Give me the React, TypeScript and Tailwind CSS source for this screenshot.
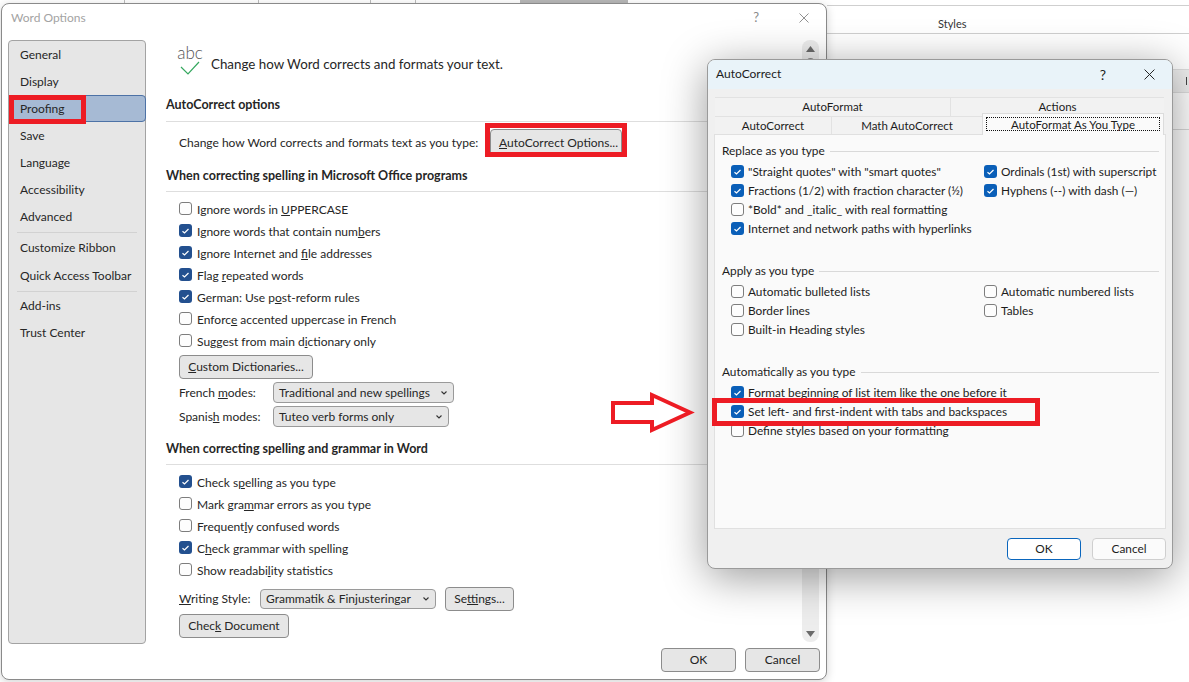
import type { ReactNode } from 'react';

type Tone = 'word' | 'dialog';

function Checkbox({ checked, tone, className }: { checked: boolean; tone: Tone; className?: string }) {
    if (!checked) {
        return <span className={`w-[13px] h-[13px] shrink-0 rounded-[3px] border border-[#7d7d7d] bg-[#fdfdfd] ${className ?? ''}`} />;
    }
    return (
        <span className={`w-[13px] h-[13px] shrink-0 rounded-[3px] flex items-center justify-center ${tone === 'word' ? 'bg-[#23508f]' : 'bg-[#0a5fb8]'} ${className ?? ''}`}>
            <svg width="9" height="8" viewBox="0 0 9 8" fill="none">
                <path d="M1.5 4.2 L3.5 6 L7.5 2" stroke="white" strokeWidth="1.2" />
            </svg>
        </span>
    );
}

function CheckRow({ checked, children }: { checked?: boolean; children: ReactNode }) {
    return (
        <div className="flex items-center h-[22px] gap-[5px] whitespace-nowrap">
            <Checkbox checked={!!checked} tone="word" className="-mt-[3px]" />
            <span>{children}</span>
        </div>
    );
}

function DialogCheck({ checked, children }: { checked?: boolean; children: ReactNode }) {
    return (
        <div className="flex items-center h-[19px] gap-[4px] whitespace-nowrap">
            <Checkbox checked={!!checked} tone="dialog" />
            <span>{children}</span>
        </div>
    );
}

function NavItem({ label, active, h = 'h-[27px]' }: { label: string; active?: boolean; h?: string }) {
    return (
        <div className={`${h} flex items-center ${active ? 'bg-[#a6bad4] border border-[#4d72a6] rounded-r-[4px] pl-[10px] -mr-px' : 'pl-[11px]'}`}>
            {label}
        </div>
    );
}

function SectionHead({ children, className }: { children: ReactNode; className: string }) {
    return (
        <div className={`${className} h-[20px] leading-[20px] text-[12.5px] font-bold text-[#262626]`}>
            {children}
        </div>
    );
}

function Btn({ className, children }: { className: string; children: ReactNode }) {
    return (
        <div className={`${className} flex items-center justify-center rounded-[4px] border border-[#8c8c8c] bg-[#e6e6e6] whitespace-nowrap`}>
            {children}
        </div>
    );
}

function Select({ className, children }: { className: string; children: ReactNode }) {
    return (
        <div className={`${className} flex items-center justify-between pl-[5px] pr-[5px] rounded-[4px] border border-[#9a9a9a] bg-[#e6e6e6] whitespace-nowrap`}>
            <span>{children}</span>
            <svg width="8" height="6" viewBox="0 0 8 6" fill="none">
                <path d="M1.5 1.5 L4 4 L6.5 1.5" stroke="#333" strokeWidth="1.1" />
            </svg>
        </div>
    );
}

function CloseIcon({ size, color }: { size: number; color: string }) {
    return (
        <svg width={size} height={size} viewBox="0 0 10 10" fill="none">
            <path d="M0.5 0.5 L9.5 9.5 M9.5 0.5 L0.5 9.5" stroke={color} strokeWidth="0.9" />
        </svg>
    );
}

function Group({ title, left, right, className }: { title: string; left: ReactNode; right?: ReactNode; className?: string }) {
    return (
        <div className={className}>
            <div className="flex items-center h-[20px] gap-[5px]">
                <span className="whitespace-nowrap">{title}</span>
                <div className="flex-1 h-px bg-[#d9d9d9]" />
            </div>
            <div className="flex pl-[9px] mt-[1px]">
                <div className="w-[253px]">{left}</div>
                <div>{right}</div>
            </div>
        </div>
    );
}

function WordOptions() {
    return (
        <div className="absolute left-[1px] top-[3px] w-[826px] h-[677px] flex flex-col rounded-[8px] border border-[#8a8a8a] bg-white shadow-[0_2px_10px_rgba(0,0,0,0.18)]">
            <div className="h-[36px] shrink-0 flex items-center pl-[9px] text-[#a3a3a3] pb-[8px]">
                <span className="flex-1">Word Options</span>
                <span className="text-[13px] text-[#8a8a8a] mr-[40px]">?</span>
                <span className="mr-[17px]"><CloseIcon size={10} color="#858585" /></span>
            </div>
            <div className="flex h-[604px] shrink-0 pl-[6px]">
                <div className="w-[138px] shrink-0 rounded-[4px] border border-[#a3a3a3] bg-[#e6e6e6] text-[#262626]">
                    <NavItem label="General" />
                    <NavItem label="Display" />
                    <NavItem label="Proofing" active />
                    <NavItem label="Save" />
                    <NavItem label="Language" />
                    <NavItem label="Accessibility" />
                    <NavItem label="Advanced" h="h-[28px]" />
                    <div className="h-[2px] mx-[8px] border-b border-[#d2d2d2]" />
                    <NavItem label="Customize Ribbon" h="h-[29px]" />
                    <NavItem label="Quick Access Toolbar" h="h-[28px]" />
                    <div className="h-[2px] mx-[8px] border-b border-[#d2d2d2]" />
                    <NavItem label="Add-ins" h="h-[27px]" />
                    <NavItem label="Trust Center" />
                </div>
                <div className="w-[636px] shrink-0 ml-[20px] text-[#262626]">
                    <div className="h-[42px] flex items-center pl-[12px] pt-[6px]">
                        <div className="w-[24px] flex flex-col items-center -mt-[9px]">
                            <span className="text-[17px] leading-[17px] font-light text-[#555]">abc</span>
                            <svg width="20" height="14" viewBox="0 0 20 14" fill="none">
                                <path d="M1 6 L8 13 L19 1" stroke="#35a85f" strokeWidth="1.2" />
                            </svg>
                        </div>
                        <span className="ml-[9px] text-[13.35px]">Change how Word corrects and formats your text.</span>
                    </div>
                    <SectionHead className="mt-[13px]">AutoCorrect options</SectionHead>
                    <div className="mt-[6px] h-px bg-[#dedede] mr-[5px]" />
                    <div className="mt-[7px] flex items-center pl-[13px] h-[27px]">
                        <span className="w-[311px] whitespace-nowrap">Change how Word corrects and formats text as you type:</span>
                        <Btn className="w-[132px] h-[27px] pl-[5px]"><span><u>A</u>utoCorrect Options...</span></Btn>
                    </div>
                    <SectionHead className="mt-[10px]">When correcting spelling in Microsoft Office programs</SectionHead>
                    <div className="mt-[5px] h-px bg-[#dedede] mr-[5px]" />
                    <div className="mt-[7px] pl-[13px]">
                        <CheckRow>Ignore words in <u>U</u>PPERCASE</CheckRow>
                        <CheckRow checked>Ignore words that contain num<u>b</u>ers</CheckRow>
                        <CheckRow checked>Ignore Internet and <u>f</u>ile addresses</CheckRow>
                        <CheckRow checked>Flag <u>r</u>epeated words</CheckRow>
                        <CheckRow checked>German: Use p<u>o</u>st-reform rules</CheckRow>
                        <CheckRow>Enforc<u>e</u> accented uppercase in French</CheckRow>
                        <CheckRow>Suggest from main d<u>i</u>ctionary only</CheckRow>
                        <Btn className="w-[134px] h-[24px] mt-[2px]"><span><u>C</u>ustom Dictionaries...</span></Btn>
                        <div className="flex items-center h-[21px] mt-[3px]">
                            <span className="w-[94px]">French <u>m</u>odes:</span>
                            <Select className="w-[181px] h-[21px]">Traditional and new spellings</Select>
                        </div>
                        <div className="flex items-center h-[21px] mt-[3px]">
                            <span className="w-[94px] whitespace-nowrap">Spanis<u>h</u> modes:</span>
                            <Select className="w-[176px] h-[21px]">Tuteo verb forms only</Select>
                        </div>
                    </div>
                    <SectionHead className="mt-[12px]">When correcting spelling and grammar in Word</SectionHead>
                    <div className="mt-[5px] h-px bg-[#dedede] mr-[5px]" />
                    <div className="mt-[7px] pl-[13px]">
                        <CheckRow checked>Check s<u>p</u>elling as you type</CheckRow>
                        <CheckRow>Mark gra<u>m</u>mar errors as you type</CheckRow>
                        <CheckRow>Frequent<u>l</u>y confused words</CheckRow>
                        <CheckRow checked>C<u>h</u>eck grammar with spelling</CheckRow>
                        <CheckRow>Show readabi<u>l</u>ity statistics</CheckRow>
                        <div className="flex items-center mt-[5px] h-[24px]">
                            <span className="w-[81px]"><u>W</u>riting Style:</span>
                            <Select className="w-[176px] h-[20px]">Grammatik &amp; Finjusteringar</Select>
                            <Btn className="w-[69px] h-[24px] ml-[9px]"><span>Se<u>t</u>tings...</span></Btn>
                        </div>
                        <Btn className="w-[110px] h-[24px] mt-[3px]"><span>Chec<u>k</u> Document</span></Btn>
                    </div>
                </div>
                <div className="w-[17px] shrink-0 rounded-[8px] bg-[#ededed] flex flex-col items-center pt-[6px] pb-[5px] h-[602px]">
                    <svg width="9" height="6" viewBox="0 0 9 6"><path d="M4.5 0 L9 6 L0 6 Z" fill="#6b6b6b" /></svg>
                    <div className="w-[9px] h-[340px] mt-[6px] rounded-full bg-[#8a8a8a]" />
                    <div className="flex-1" />
                    <svg width="9" height="6" viewBox="0 0 9 6"><path d="M0 0 L9 0 L4.5 6 Z" fill="#6b6b6b" /></svg>
                </div>
            </div>
            <div className="flex justify-end gap-[9px] pt-[4px] pr-[6px]">
                <Btn className="w-[75px] h-[24px]">OK</Btn>
                <Btn className="w-[75px] h-[24px]">Cancel</Btn>
            </div>
        </div>
    );
}

function AutoCorrectDialog() {
    return (
        <div className="absolute left-[707px] top-[59px] w-[466px] h-[510px] flex flex-col rounded-[8px] border border-[#9a9a9a] bg-[#f0f0f0] overflow-hidden text-[11.85px] text-[#1c1c1c] shadow-[0_8px_44px_rgba(0,0,0,0.4)]">
            <div className="h-[29px] shrink-0 flex items-center bg-[#e9f3f9] pl-[8px] pb-[1px] text-[12px]">
                <span className="flex-1">AutoCorrect</span>
                <span className="text-[14px] mr-[38px]">?</span>
                <span className="mr-[17px]"><CloseIcon size={11} color="#222" /></span>
            </div>
            <div className="pl-[6px] pt-[8px]">
                <div className="ml-px flex w-[449px] h-[19px] text-center text-[11.5px]">
                    <div className="w-[236px] bg-[#f2f2f2] border-t border-r border-[#e2e2e2] leading-[18px]">AutoFormat</div>
                    <div className="w-[213px] bg-[#f2f2f2] border-t border-[#e2e2e2] leading-[18px]">Actions</div>
                </div>
                <div className="ml-px flex w-[450px] h-[18px] text-center text-[11.5px] items-end relative z-10">
                    <div className="w-[117px] h-[18px] bg-[#f2f2f2] border-t border-r border-[#e2e2e2] leading-[18px]">AutoCorrect</div>
                    <div className="w-[150px] h-[18px] bg-[#f2f2f2] border-t border-[#e2e2e2] leading-[18px]">Math AutoCorrect</div>
                    <div className="w-[182px] h-[22px] -mb-px bg-[#fafafa] border-t border-x border-[#dcdcdc] p-[3px]">
                        <div className="h-[14px] leading-[13px] border border-dotted border-[#111]">AutoFormat As You Type</div>
                    </div>
                </div>
                <div className="w-[452px] h-[395px] border border-[#e0e0e0] bg-[#fafafa] pt-[6px] pl-[7px] pr-[6px]">
                    <Group
                        title="Replace as you type"
                        left={<>
                            <DialogCheck checked>"Straight quotes" with "smart quotes"</DialogCheck>
                            <DialogCheck checked>Fractions (1/2) with fraction character (½)</DialogCheck>
                            <DialogCheck>*Bold* and _italic_ with real formatting</DialogCheck>
                            <DialogCheck checked>Internet and network paths with hyperlinks</DialogCheck>
                        </>}
                        right={<>
                            <DialogCheck checked>Ordinals (1st) with superscript</DialogCheck>
                            <DialogCheck checked>Hyphens (--) with dash (—)</DialogCheck>
                        </>}
                    />
                    <Group
                        className="mt-[23px]"
                        title="Apply as you type"
                        left={<>
                            <DialogCheck>Automatic bulleted lists</DialogCheck>
                            <DialogCheck>Border lines</DialogCheck>
                            <DialogCheck>Built-in Heading styles</DialogCheck>
                        </>}
                        right={<>
                            <DialogCheck>Automatic numbered lists</DialogCheck>
                            <DialogCheck>Tables</DialogCheck>
                        </>}
                    />
                    <Group
                        className="mt-[23px]"
                        title="Automatically as you type"
                        left={<>
                            <DialogCheck checked>Format beginning of list item like the one before it</DialogCheck>
                            <DialogCheck checked>Set left- and first-indent with tabs and backspaces</DialogCheck>
                            <DialogCheck>Define styles based on your formatting</DialogCheck>
                        </>}
                    />
                </div>
                <div className="flex justify-end gap-[11px] pt-[9px] pr-[6px]">
                    <div className="w-[74px] h-[22px] flex items-center justify-center rounded-[4px] border border-[#0a66bd] bg-white">OK</div>
                    <div className="w-[74px] h-[22px] flex items-center justify-center rounded-[4px] border border-[#cfcfcf] bg-[#fbfbfb]">Cancel</div>
                </div>
            </div>
        </div>
    );
}

export default function App() {
    return (
        <div className="relative w-[1189px] h-[682px] overflow-hidden bg-white font-['Lato',sans-serif] text-[12px] text-[#222]">
            {/* ribbon behind the dialogs */}
            <div className="flex h-[3px]">
                <div className="w-[125px] border-r border-[#bdbdbd]" />
                <div className="w-[134px] border-r border-[#bdbdbd]" />
                <div className="w-[112px] border-r border-[#bdbdbd]" />
                <div className="w-[45px] border-r border-[#bdbdbd]" />
                <div className="w-[104px]" />
                <div className="w-[108px] bg-[#b8b8b8]" />
            </div>
            <div className="ml-[827px] mt-[2px] h-[29px] border-y border-[#cfcfcf] pl-[111px] leading-[36px] text-[11px] text-[#333]">Styles</div>
            <div className="ml-[827px] mt-[35px] h-[24px] flex items-center justify-end bg-[#eeeeee] border-y border-[#dedede]">
                <span className="w-px h-[8px] bg-[#444] mr-[2px]" />
            </div>
            <div className="ml-[827px] mt-[36px] h-px bg-[#d8d8d8]" />

            <WordOptions />
            <AutoCorrectDialog />

            {/* red annotations */}
            <div className="absolute left-[9px] top-[95px] w-[77px] h-[29px] border-[5px] border-[#ed1c24]" />
            <div className="absolute left-[485px] top-[123px] w-[142px] h-[34px] border-[5px] border-[#ed1c24]" />
            <div className="absolute left-[712px] top-[398px] w-[328px] h-[28px] border-[5px] border-[#ed1c24]" />
            <svg className="absolute left-[610px] top-[390px]" width="86" height="45" viewBox="0 0 86 45" fill="none">
                <path d="M3 13 H42 V5 L80 22.5 L42 40 V32 H3 Z" fill="white" stroke="#ed1c24" strokeWidth="4" />
            </svg>
        </div>
    );
}
